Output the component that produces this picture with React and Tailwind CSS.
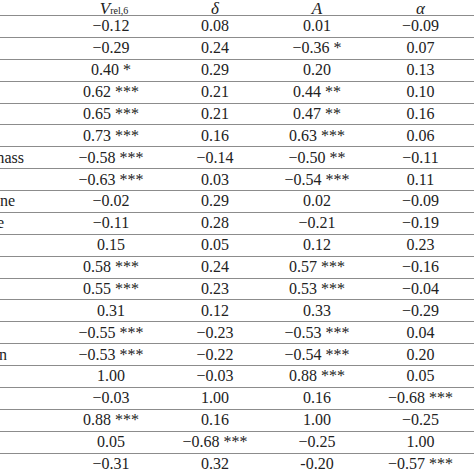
import React from "react";

const rows = [
  ["", "−0.12", "0.08", "0.01", "−0.09"],
  ["", "−0.29", "0.24", "−0.36 *", "0.07"],
  ["", "0.40 *", "0.29", "0.20", "0.13"],
  ["", "0.62 ***", "0.21", "0.44 **", "0.10"],
  ["", "0.65 ***", "0.21", "0.47 **", "0.16"],
  ["", "0.73 ***", "0.16", "0.63 ***", "0.06"],
  ["mass", "−0.58 ***", "−0.14", "−0.50 **", "−0.11"],
  ["", "−0.63 ***", "0.03", "−0.54 ***", "0.11"],
  ["ne", "−0.02", "0.29", "0.02", "−0.09"],
  ["e", "−0.11", "0.28", "−0.21", "−0.19"],
  ["", "0.15", "0.05", "0.12", "0.23"],
  ["", "0.58 ***", "0.24", "0.57 ***", "−0.16"],
  ["", "0.55 ***", "0.23", "0.53 ***", "−0.04"],
  ["", "0.31", "0.12", "0.33", "−0.29"],
  ["", "−0.55 ***", "−0.23", "−0.53 ***", "0.04"],
  ["n", "−0.53 ***", "−0.22", "−0.54 ***", "0.20"],
  ["", "1.00", "−0.03", "0.88 ***", "0.05"],
  ["", "−0.03", "1.00", "0.16", "−0.68 ***"],
  ["", "0.88 ***", "0.16", "1.00", "−0.25"],
  ["", "0.05", "−0.68 ***", "−0.25", "1.00"],
  ["", "−0.31", "0.32", "-0.20", "−0.57 ***"],
];

const labelOffset = { mass: "-ml-[8px]", ne: "ml-0", e: "-ml-[3px]", n: "-ml-[1px]" };

function Label({ text }) {
  if (!text) return <div />;
  return (
    <div className="overflow-hidden whitespace-nowrap flex items-center">
      <span className={labelOffset[text]}>{text}</span>
    </div>
  );
}

export default function App() {
  return (
    <div className="w-[474px] h-[474px] overflow-hidden bg-white text-[#222] text-[16px] leading-none font-['Liberation_Serif',serif]">
      <div className="grid grid-cols-[59px_104px_104px_100px_107px] h-[15px] items-end pb-[3px]">
        <div />
        <div className="text-center pl-[6px]">
          <span className="italic text-[17px]">V</span>
          <span className="text-[10px]">rel,6</span>
        </div>
        <div className="text-center italic text-[17px]">δ</div>
        <div className="text-center italic text-[17px]">A</div>
        <div className="text-center italic text-[17px]">α</div>
      </div>
      {rows.map((r, i) => (
        <div
          key={i}
          className="grid grid-cols-[59px_104px_104px_100px_107px] h-[21.875px] border-t-[1.5px] border-[#8c8c8c] items-center"
        >
          <Label text={r[0]} />
          <div className="text-center whitespace-nowrap">{r[1]}</div>
          <div className="text-center whitespace-nowrap">{r[2]}</div>
          <div className="text-center whitespace-nowrap">{r[3]}</div>
          <div className="text-center whitespace-nowrap">{r[4]}</div>
        </div>
      ))}
    </div>
  );
}
